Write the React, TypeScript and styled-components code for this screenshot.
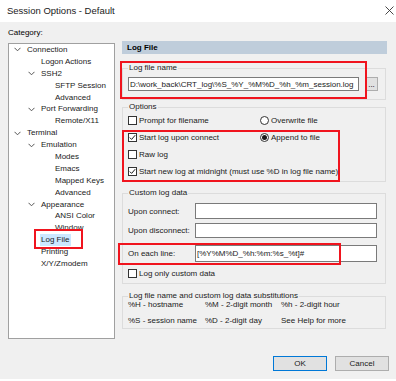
import styled, { createGlobalStyle } from "styled-components";

const GlobalStyle = createGlobalStyle`
  html, body {
    margin: 0;
    padding: 0;
    background: #ffffff;
  }
  body {
    font-family: "Liberation Sans", Arial, sans-serif;
    font-size: 8px;
    color: #000;
  }
`;

interface TreeNode {
  label: string;
  level: number;
  expander?: boolean;
  selected?: boolean;
}

const treeNodes: TreeNode[] = [
  { label: "Connection", level: 0, expander: true },
  { label: "Logon Actions", level: 1 },
  { label: "SSH2", level: 1, expander: true },
  { label: "SFTP Session", level: 2 },
  { label: "Advanced", level: 2 },
  { label: "Port Forwarding", level: 1, expander: true },
  { label: "Remote/X11", level: 2 },
  { label: "Terminal", level: 0, expander: true },
  { label: "Emulation", level: 1, expander: true },
  { label: "Modes", level: 2 },
  { label: "Emacs", level: 2 },
  { label: "Mapped Keys", level: 2 },
  { label: "Advanced", level: 2 },
  { label: "Appearance", level: 1, expander: true },
  { label: "ANSI Color", level: 2 },
  { label: "Window", level: 2 },
  { label: "Log File", level: 1, selected: true },
  { label: "Printing", level: 1 },
  { label: "X/Y/Zmodem", level: 1 },
];

const Window = styled.div`
  position: relative;
  width: 396px;
  height: 381px;
  background: #f0f0f0;
  display: flex;
  flex-direction: column;
  box-sizing: border-box;
  border-bottom: 2px solid #ffffff;
  overflow: hidden;
`;

const TitleBar = styled.div`
  height: 22px;
  flex: none;
  background: #ffffff;
  display: flex;
  align-items: center;
  justify-content: space-between;
  padding: 0 2px 2px 7px;
  box-sizing: border-box;
`;

const Title = styled.span`
  font-size: 9.5px;
  color: #1a1a1a;
`;

const CloseButton = styled.div`
  width: 10px;
  height: 10px;
  display: flex;
  align-items: center;
  justify-content: center;
`;

const Main = styled.div`
  display: flex;
  padding-left: 8px;
`;

const LeftCol = styled.div`
  width: 107px;
  flex: none;
`;

const CategoryLabel = styled.div`
  height: 21px;
  line-height: 22px;
`;

const TreeBox = styled.div`
  height: 296px;
  background: #ffffff;
  border: 1px solid #a0a0a0;
  box-sizing: border-box;
`;

const TreeRow = styled.div<{ $level: number }>`
  height: 11.9px;
  display: flex;
  align-items: center;
  padding-left: ${(p) => 4 + p.$level * 14}px;
  white-space: nowrap;
`;

const Expander = styled.span`
  width: 14px;
  flex: none;
  display: flex;
  align-items: center;
  justify-content: flex-start;
  padding-left: 1px;
  box-sizing: border-box;
`;

const TreeLabel = styled.span<{ $selected?: boolean }>`
  color: #1a1a1a;
  padding: 1px 2px 1px 1px;
  margin-left: -1px;
  background: ${(p) => (p.$selected ? "#cce8ff" : "transparent")};
  line-height: 10px;
`;

const RightCol = styled.div`
  width: 265px;
  margin-left: 7px;
  padding-top: 19px;
`;

const Header = styled.div`
  height: 13px;
  background: #bfcddb;
  font-weight: bold;
  display: flex;
  align-items: center;
  padding-left: 5px;
`;

const Group = styled.fieldset<{ $top: number }>`
  margin: ${(p) => p.$top}px 1px 0 0;
  border: 1px solid #dcdcdc;
  padding: 0 6px 0 5px;
  min-width: 0;
`;

const Legend = styled.legend`
  font-size: 8px;
  line-height: 10px;
  padding: 0 1px;
  margin-left: 0px;
  color: #1a1a1a;
`;

const FileRow = styled.div`
  display: flex;
  gap: 6px;
  padding: 4px 0 8px 0;
`;

const TextBox = styled.div<{ $width: number; $height?: number }>`
  width: ${(p) => p.$width}px;
  height: ${(p) => p.$height ?? 16}px;
  background: #ffffff;
  border: 1px solid #7a7a7a;
  box-sizing: border-box;
  display: flex;
  align-items: center;
  padding-left: 1px;
  white-space: nowrap;
  overflow: hidden;
  color: #1a1a1a;
`;

const BrowseButton = styled.div`
  width: 13px;
  height: 14px;
  background: #e1e1e1;
  border: 1px solid #adadad;
  box-sizing: border-box;
  display: flex;
  align-items: flex-end;
  justify-content: center;
  line-height: 10px;
  font-size: 8px;
`;

const OptionsGrid = styled.div`
  display: grid;
  grid-template-columns: 132px 1fr;
  grid-auto-rows: 17px;
  padding-bottom: 1px;
`;

const Choice = styled.label<{ $span?: boolean }>`
  display: flex;
  align-items: center;
  gap: 2px;
  white-space: nowrap;
  color: #1a1a1a;
  grid-column: ${(p) => (p.$span ? "1 / span 2" : "auto")};
`;

const Box = styled.span`
  width: 9px;
  height: 9px;
  flex: none;
  border: 1px solid #333333;
  background: #ffffff;
  box-sizing: border-box;
  display: flex;
  align-items: center;
  justify-content: center;
`;

const Radio = styled.span<{ $on?: boolean }>`
  width: 9px;
  height: 9px;
  flex: none;
  border: 1px solid #333333;
  border-radius: 50%;
  background: #ffffff;
  box-sizing: border-box;
  display: flex;
  align-items: center;
  justify-content: center;
  &::after {
    content: "";
    width: 5px;
    height: 5px;
    border-radius: 50%;
    background: ${(p) => (p.$on ? "#1a1a1a" : "transparent")};
  }
`;

const CustomBody = styled.div`
  padding: 5px 0 2px 0;
  display: flex;
  flex-direction: column;
`;

const FieldRow = styled.div<{ $gap: number; $height: number }>`
  display: flex;
  align-items: center;
  margin-top: ${(p) => p.$gap}px;
  height: ${(p) => p.$height}px;
`;

const FieldLabel = styled.span`
  width: 67px;
  flex: none;
  color: #1a1a1a;
`;

const CheckRow = styled.div`
  height: 16px;
  margin-top: 3px;
  display: flex;
  align-items: center;
`;

const SubsGrid = styled.div`
  display: grid;
  grid-template-columns: 77px 76px 1fr;
  grid-auto-rows: 16px;
  align-items: center;
  margin-top: -5px;
  white-space: nowrap;
  color: #1a1a1a;
`;

const Footer = styled.div`
  display: flex;
  justify-content: flex-end;
  gap: 8px;
  margin-top: 17px;
  padding-right: 7px;
`;

const Button = styled.div<{ $default?: boolean }>`
  width: 54px;
  height: 15px;
  box-sizing: border-box;
  background: #e1e1e1;
  border: 1px solid ${(p) => (p.$default ? "#0078d7" : "#adadad")};
  display: flex;
  align-items: center;
  justify-content: center;
  color: #1a1a1a;
`;

const Annotation = styled.div`
  position: absolute;
  border: 2px solid #f0141e;
  box-sizing: border-box;
  pointer-events: none;
`;

const Chevron = () => (
  <svg width="7" height="5" viewBox="0 0 7 5">
    <polyline points="0.5,0.8 3.5,3.8 6.5,0.8" fill="none" stroke="#555" strokeWidth="1" />
  </svg>
);

const Check = () => (
  <svg width="7" height="7" viewBox="0 0 7 7">
    <polyline points="0.8,3.6 2.6,5.4 6.2,1.2" fill="none" stroke="#1a1a1a" strokeWidth="1" />
  </svg>
);

const CheckBox = ({ checked }: { checked?: boolean }) => <Box>{checked && <Check />}</Box>;

const annotations = [
  { left: 120, top: 61, width: 247, height: 38 },
  { left: 122, top: 130, width: 218, height: 52 },
  { left: 118, top: 243, width: 223, height: 22 },
  { left: 34, top: 229, width: 49, height: 20 },
];

export default function App() {
  return (
    <>
      <GlobalStyle />
      <Window>
        <TitleBar>
          <Title>Session Options - Default</Title>
          <CloseButton>
            <svg width="9" height="9" viewBox="0 0 9 9">
              <path d="M0.5 0.5 L8.5 8.5 M8.5 0.5 L0.5 8.5" stroke="#333" strokeWidth="0.9" />
            </svg>
          </CloseButton>
        </TitleBar>
        <Main>
          <LeftCol>
            <CategoryLabel>Category:</CategoryLabel>
            <TreeBox>
              {treeNodes.map((n, i) => (
                <TreeRow key={i} $level={n.level}>
                  <Expander>{n.expander && <Chevron />}</Expander>
                  <TreeLabel $selected={n.selected}>{n.label}</TreeLabel>
                </TreeRow>
              ))}
            </TreeBox>
          </LeftCol>
          <RightCol>
            <Header>Log File</Header>
            <Group $top={9}>
              <Legend>Log file name</Legend>
              <FileRow>
                <TextBox $width={231} $height={14}>
                  D:\work_back\CRT_log\%S_%Y_%M%D_%h_%m_session.log
                </TextBox>
                <BrowseButton>...</BrowseButton>
              </FileRow>
            </Group>
            <Group $top={2}>
              <Legend>Options</Legend>
              <OptionsGrid>
                <Choice>
                  <CheckBox />
                  Prompt for filename
                </Choice>
                <Choice>
                  <Radio />
                  Overwrite file
                </Choice>
                <Choice>
                  <CheckBox checked />
                  Start log upon connect
                </Choice>
                <Choice>
                  <Radio $on />
                  Append to file
                </Choice>
                <Choice $span>
                  <CheckBox />
                  Raw log
                </Choice>
                <Choice $span>
                  <CheckBox checked />
                  Start new log at midnight (must use %D in log file name)
                </Choice>
              </OptionsGrid>
            </Group>
            <Group $top={6}>
              <Legend>Custom log data</Legend>
              <CustomBody>
                <FieldRow $gap={0} $height={16}>
                  <FieldLabel>Upon connect:</FieldLabel>
                  <TextBox $width={182} $height={16} />
                </FieldRow>
                <FieldRow $gap={4} $height={15}>
                  <FieldLabel>Upon disconnect:</FieldLabel>
                  <TextBox $width={182} $height={15} />
                </FieldRow>
                <FieldRow $gap={7} $height={17}>
                  <FieldLabel>On each line:</FieldLabel>
                  <TextBox $width={182} $height={17}>
                    [%Y%M%D_%h:%m:%s_%t]#
                  </TextBox>
                </FieldRow>
                <CheckRow>
                  <Choice>
                    <CheckBox />
                    Log only custom data
                  </Choice>
                </CheckRow>
              </CustomBody>
            </Group>
            <Group $top={7}>
              <Legend>Log file name and custom log data substitutions</Legend>
              <SubsGrid>
                <span>%H - hostname</span>
                <span>%M - 2-digit month</span>
                <span>%h - 2-digit hour</span>
                <span>%S - session name</span>
                <span>%D - 2-digit day</span>
                <span>See Help for more</span>
              </SubsGrid>
            </Group>
          </RightCol>
        </Main>
        <Footer>
          <Button $default>OK</Button>
          <Button>Cancel</Button>
        </Footer>
        {annotations.map((a, i) => (
          <Annotation
            key={i}
            style={{ left: a.left, top: a.top, width: a.width, height: a.height }}
          />
        ))}
      </Window>
    </>
  );
}
